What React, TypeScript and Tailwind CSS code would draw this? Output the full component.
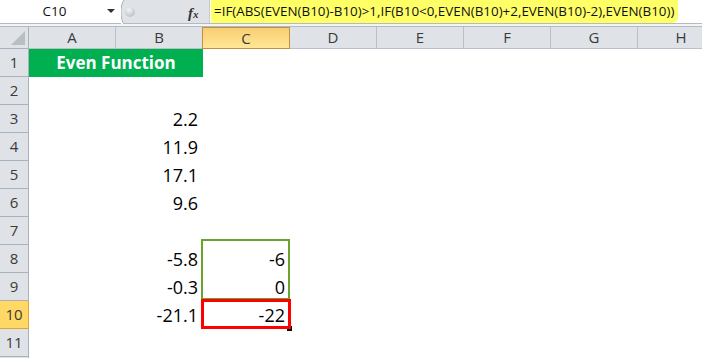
import React from "react";

const cols = ["A", "B", "C", "D", "E", "F", "G", "H"];
const bVals: Record<number, string> = { 3: "2.2", 4: "11.9", 5: "17.1", 6: "9.6", 8: "-5.8", 9: "-0.3", 10: "-21.1" };
const cVals: Record<number, string> = { 8: "-6", 9: "0", 10: "-22" };
const rows = [1, 2, 3, 4, 5, 6, 7, 8, 9, 10, 11, 12];

export default function App() {
  return (
    <div
      className="relative w-[702px] h-[358px] overflow-hidden bg-white"
      style={{ fontFamily: '"Open Sans", "Noto Sans", sans-serif' }}
    >
      {/* formula bar */}
      <div className="flex h-[24px] bg-[#dfe3e8] border-b border-[#b4bac2]">
        <div className="w-[121px] bg-white flex items-center">
          <span className="flex-1 text-center text-[13.5px] text-[#111] pl-[2px]">C10</span>
          <svg width="8" height="5" viewBox="0 0 8 5" className="mr-[6px]">
            <path d="M0 0 L8 0 L4 4 Z" fill="#333" />
          </svg>
        </div>
        <div className="w-[88px] flex items-center relative">
          <svg width="20" height="24" viewBox="0 0 20 24" className="absolute left-0 top-0">
            <defs>
              <radialGradient id="g" cx="0.4" cy="0.3" r="0.7">
                <stop offset="0" stopColor="#f4f4f4" />
                <stop offset="1" stopColor="#bfc4ca" />
              </radialGradient>
            </defs>
            <path d="M0 0 L3 0 C-1 4 -1 20 3 24 L0 24 Z" fill="#fff" />
            <path d="M3 0 C-1 4 -1 20 3 24" stroke="#aab1ba" strokeWidth="1" fill="none" />
            <circle cx="9" cy="12" r="5" fill="url(#g)" />
          </svg>
          <span
            className="absolute left-[67px] top-[2px] text-[15px] italic font-bold text-[#333]"
            style={{ fontFamily: '"Liberation Serif", serif' }}
          >
            f<span className="text-[11px]">x</span>
          </span>
        </div>
        <div className="flex-1 bg-white flex items-stretch border-l border-[#c6cbd1]">
          <span className="ml-[1px] bg-[#ffff66] rounded-br-[6px] flex items-center pl-[3px] pr-[4px] text-[13.4px] text-[#111] whitespace-nowrap">
            =IF(ABS(EVEN(B10)-B10)&gt;1,IF(B10&lt;0,EVEN(B10)+2,EVEN(B10)-2),EVEN(B10))
          </span>
        </div>
      </div>
      <div className="h-[3px] bg-[#f3f4f6] border-b border-[#b4bac2]" />

      {/* grid */}
      <div className="grid grid-cols-[29px_repeat(8,87px)]">
        {/* header row */}
        <div className="h-[22px] bg-[#dfe3e8] border-r border-b border-[#a9b1bb] relative">
          <svg width="14" height="14" viewBox="0 0 14 14" className="absolute right-[3px] bottom-[3px]">
            <path d="M14 0 L14 14 L0 14 Z" fill="#b9bec5" />
          </svg>
        </div>
        {cols.map((c) =>
          c === "C" ? (
            <div
              key={c}
              className="h-[22px] bg-gradient-to-b from-[#f8cd73] to-[#ffe895] border border-[#c2913f] flex items-center justify-center text-[15px] text-[#3a3a3a] -ml-[1px]"
            >
              {c}
            </div>
          ) : (
            <div
              key={c}
              className="h-[22px] bg-[#dfe3e8] border-r border-b border-[#b9c0c9] flex items-center justify-center text-[15px] text-[#3a3a3a]"
            >
              {c}
            </div>
          )
        )}

        {rows.map((r) => (
          <React.Fragment key={r}>
            <div
              className={
                r === 10
                  ? "h-[28px] bg-[#ffd865] border-r border-b border-[#e0a23c] flex items-center justify-center text-[15px] text-[#3a3a3a]"
                  : "h-[28px] bg-[#dfe3e8] border-r border-b border-[#a9b1bb] flex items-center justify-center text-[15px] text-[#3a3a3a]"
              }
            >
              {r < 12 ? r : ""}
            </div>
            {r === 1 ? (
              <div className="col-span-2 h-[28px] bg-[#00b050] flex items-center justify-center text-[17px] font-bold text-white leading-[28px]">
                Even Function
              </div>
            ) : (
              <>
                <div className="h-[28px]" />
                <div className="h-[28px] text-right pr-[5px] text-[18px] leading-[28px] text-black">{bVals[r] ?? ""}</div>
              </>
            )}
            <div className="h-[28px] text-right pr-[5px] text-[18px] leading-[28px] text-black">{cVals[r] ?? ""}</div>
            {[0, 1, 2, 3, 4].map((i) => (
              <div key={i} className="h-[28px]" />
            ))}
          </React.Fragment>
        ))}
      </div>

      {/* annotations */}
      <div className="absolute left-[287px] top-[326px] w-[5px] h-[5px] bg-black" />
      <div className="absolute left-[201px] top-[239px] w-[89px] h-[61px] border-2 border-[#6aa22e]" />
      <div className="absolute left-[201px] top-[299px] w-[90px] h-[30px] border-[3px] border-[#ff0000]" />
    </div>
  );
}
